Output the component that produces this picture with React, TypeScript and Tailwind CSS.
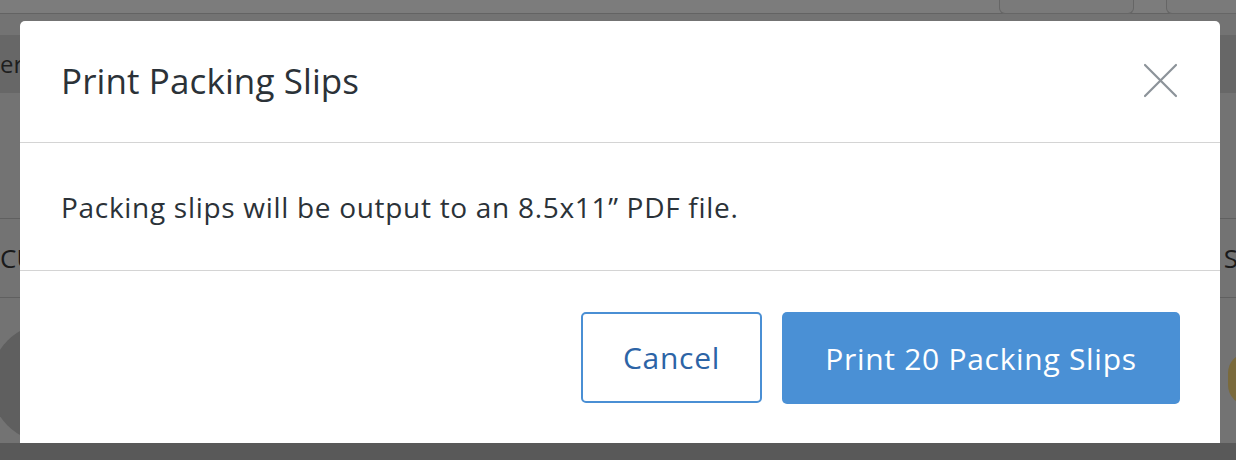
import React from "react";

export default function App() {
  const font = { fontFamily: "'Open Sans', Lato, sans-serif" };
  return (
    <div className="relative w-[1236px] h-[460px] overflow-hidden bg-[#737373]" style={font}>
      {/* dimmed page underneath */}
      <div className="flex flex-col h-full">
        <div className="h-[14px] bg-[#7c7c7c] border-b border-[#636363] flex justify-end gap-[32px]">
          <div className="w-[135px] h-[14px] rounded-b-[6px] border border-t-0 border-[#666] bg-[#7a7a7a]" />
          <div className="w-[70px] h-[14px] rounded-bl-[6px] border border-t-0 border-r-0 border-[#666] bg-[#7a7a7a]" />
        </div>
        <div className="h-[21px]" />
        <div className="h-[60px] bg-[#676767] flex items-center">
          <span className="text-[24px] text-[#1e1e1e]">er</span>
        </div>
        <div className="h-[127px]" />
        <div className="h-[82px] border-y border-[#606060] flex items-center justify-between">
          <span className="text-[26px] text-[#1a1a1a]">CU</span>
          <span className="text-[26px] text-[#1a1a1a] -mr-[2px]">S</span>
        </div>
        <div className="flex-1 relative flex items-start justify-between">
          <div className="w-[120px] h-[120px] rounded-full bg-[#5f5f5f] -ml-[10px] mt-[25px]" />
          <div className="w-[40px] h-[52px] rounded-full bg-[#7a6a3c] -mr-[32px] mt-[55px]" />
        </div>
        <div className="h-[17px] bg-[#595959]" />
      </div>

      {/* modal overlay */}
      <div className="absolute inset-0 pl-[20px] pr-[16px] pt-[21px]">
        <div className="bg-white rounded-t-[5px] flex flex-col h-[422px]">
          <div className="h-[122px] border-b border-[#d4d4d4] flex items-center justify-between pl-[41px] pr-[42px]">
            <h2 className="text-[35px] text-[#2b3238] tracking-[0.1px]">Print Packing Slips</h2>
            <svg width="35" height="35" viewBox="0 0 35 35" className="mt-[-2px]">
              <path d="M2 2 L33 33 M33 2 L2 33" stroke="#8c9399" strokeWidth="2.2" strokeLinecap="round" />
            </svg>
          </div>
          <div className="h-[128px] border-b border-[#d4d4d4] flex items-center pl-[41px]">
            <p className="text-[28px] text-[#2b3238] tracking-[0.7px]">
              Packing slips will be output to an 8.5x11” PDF file.
            </p>
          </div>
          <div className="flex-1 flex items-start justify-end gap-[20px] pt-[41px] pr-[40px]">
            <button className="w-[181px] h-[91px] rounded-[5px] border-2 border-[#4a8fd4] bg-white text-[30px] text-[#2c64a6] tracking-[0.7px]">
              Cancel
            </button>
            <button className="w-[398px] h-[92px] rounded-[5px] bg-[#4a90d5] text-[30px] text-white tracking-[0.7px]">
              Print 20 Packing Slips
            </button>
          </div>
        </div>
      </div>
    </div>
  );
}
